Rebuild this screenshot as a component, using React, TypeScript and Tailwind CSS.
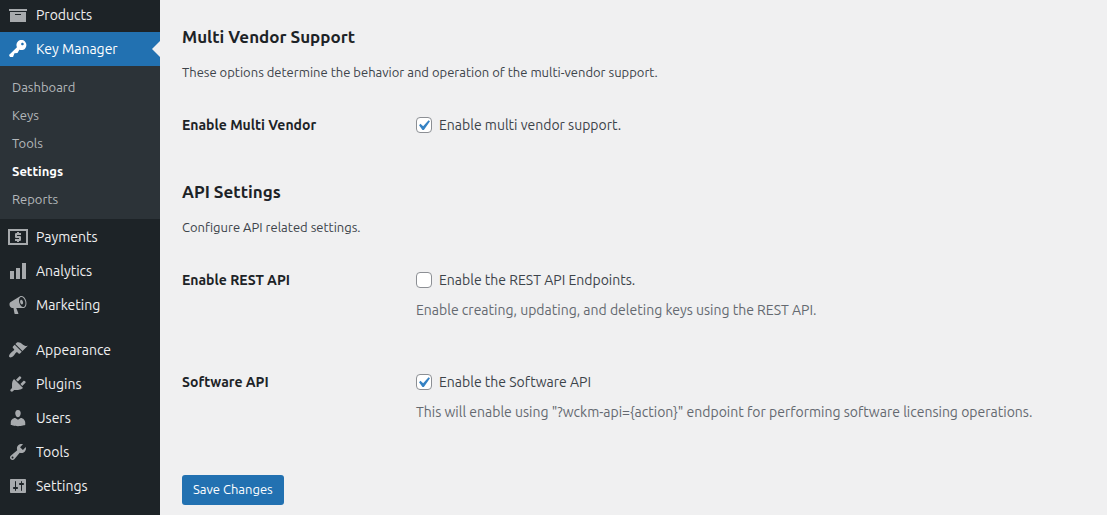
import React, { useState } from 'react';
import clsx from 'clsx';

interface IconProps {
  d: string;
}

const icons = {
  archive: 'M19 4v2H1V4h18zM2 7h16v10H2V7zm11 3V9H7v1h6z',
  key: 'M16.95 2.58c1.96 1.95 1.96 5.12 0 7.07-1.51 1.51-3.75 1.84-5.59 1.01l-1.87 3.31-2.99.31L5 18H2l-1-2 7.95-7.69c-.92-1.87-.62-4.18.93-5.73 1.95-1.96 5.12-1.96 7.07 0zm-2.51 3.79c.74 0 1.33-.6 1.33-1.34 0-.73-.59-1.33-1.33-1.33-.73 0-1.33.6-1.33 1.33 0 .74.6 1.34 1.33 1.34z',
  payments: 'M0 2h20v16H0V2zm2 2v12h16V4H2zM9 5h2v1h2v2H9v1h3.2l.8.8v3.4l-.8.8H11v1H9v-1H7v-2h4v-1H7.8L7 10.200V6.800L7.800 6H9V5z',
  chart: 'M18 18V2h-4v16h4zm-6 0V7H8v11h4zm-6 0v-8H2v8h4z',
  megaphone: 'M18.15 5.94c.46 1.62.38 3.22-.02 4.48-.42 1.28-1.26 2.18-2.3 2.48-.16.06-.26.06-.4.06-.06.02-.12.02-.18.02-.06.02-.14.02-.22.02h-6.8l2.22 5.5c.02.14-.06.26-.14.34-.08.1-.24.16-.34.16H6.95c-.1 0-.26-.06-.34-.16-.08-.08-.16-.2-.14-.34l-1-5.5H4.25l-.02-.02c-.5.06-1.08-.18-1.54-.62s-.88-1.08-1.06-1.88c-.24-.8-.2-1.56-.02-2.2.18-.62.58-1.08 1.06-1.3l.02-.02 9-5.4c.1-.06.18-.1.24-.16.06-.04.14-.08.24-.12.16-.08.28-.12.5-.18 1.04-.3 2.24.1 3.22.98s1.84 2.24 2.26 3.86zm-2.58 5.98h-.02c.4-.1.74-.34 1.04-.7.58-.7.86-1.76.86-3.04 0-.64-.1-1.3-.28-1.98-.34-1.36-1.02-2.5-1.78-3.24s-1.68-1.1-2.46-.88c-.82.22-1.4.96-1.7 2-.32 1.04-.28 2.36.06 3.72.38 1.36 1 2.5 1.8 3.24.78.74 1.62 1.1 2.48.88zm-2.54-7.08c.22-.04.42-.02.62.04.38.16.76.48 1.02 1s.42 1.2.42 1.78c0 .3-.04.56-.12.8-.18.48-.44.84-.86.94-.34.1-.8-.06-1.14-.4s-.64-.86-.78-1.5c-.18-.62-.12-1.24.02-1.72s.48-.84.82-.94z',
  brush: 'M14.48 11.06L7.41 3.99l1.5-1.5c.5-.56 2.3-.47 3.51.32 1.21.8 1.43 1.28 2.91 2.1 1.18.64 2.45 1.26 4.45.85zm-.71.71L6.7 4.7 4.93 6.47c-.39.39-.39 1.02 0 1.41l1.06 1.06c.39.39.39 1.03 0 1.42-.6.6-1.43 1.11-2.21 1.69-.35.26-.7.53-1.01.84C1.43 14.23.4 16.08 1.4 17.07c.99 1 2.84-.03 4.18-1.36.31-.31.58-.66.85-1.02.57-.78 1.08-1.61 1.69-2.21.39-.39 1.02-.39 1.41 0l1.06 1.06c.39.39 1.02.39 1.41 0z',
  plug: 'M13.11 4.36L9.87 7.6 8 5.73l3.24-3.24c.35-.34 1.05-.2 1.56.32.52.51.66 1.21.31 1.55zm-8 1.77l.91-1.12 9.01 9.01-1.19.84c-.71.71-2.63 1.16-3.82 1.16H6.14L4.9 17.26c-.59.59-1.54.59-2.12 0-.59-.58-.59-1.53 0-2.12l1.24-1.24v-3.88c0-1.13.4-3.19 1.09-3.89zm7.26 3.97l3.24-3.24c.34-.35 1.04-.21 1.55.31.52.51.66 1.21.31 1.55l-3.24 3.25z',
  user: 'M10 9.25c-2.27 0-2.73-3.44-2.73-3.44C7 4.02 7.82 2 9.97 2c2.16 0 2.98 2.02 2.71 3.81 0 0-.41 3.44-2.68 3.44zm0 2.57L12.72 10c2.39 0 4.52 2.33 4.52 4.53v2.49s-3.65 1.13-7.24 1.13c-3.65 0-7.24-1.13-7.24-1.13v-2.49c0-2.25 1.94-4.48 4.47-4.48z',
  wrench: 'M16.68 9.77c-1.34 1.34-3.3 1.67-4.95.99l-5.41 6.52c-.99.99-2.59.99-3.58 0s-.99-2.59 0-3.57l6.52-5.42c-.68-1.65-.35-3.61.99-4.95 1.28-1.28 3.12-1.62 4.72-1.06l-2.89 2.89 2.82 2.82 2.86-2.87c.53 1.58.18 3.39-1.08 4.65zM3.81 16.21c.4.39 1.04.39 1.43 0 .4-.4.4-1.04 0-1.43-.39-.4-1.03-.4-1.43 0-.39.39-.39 1.03 0 1.43z',
  sliders: 'M18 16V4c0-.55-.45-1-1-1H3c-.55 0-1 .45-1 1v12c0 .55.45 1 1 1h14c.55 0 1-.45 1-1zM8 11h1c.55 0 1 .45 1 1s-.45 1-1 1H8v1.500c0 .28-.22.5-.5.5s-.5-.22-.5-.5V13H6c-.55 0-1-.45-1-1s.45-1 1-1h1V5.500c0-.28.22-.5.5-.5s.5.22.5.5V11zm5-2h-1c-.55 0-1-.45-1-1s.45-1 1-1h1V5.500c0-.28.22-.5.5-.5s.5.22.5.5V7h1c.55 0 1 .45 1 1s-.45 1-1 1h-1v5.500c0 .28-.22.5-.5.5s-.5-.22-.5-.5V9z',
};

const MenuIcon: React.FC<IconProps> = ({ d }) => (
  <svg viewBox="0 0 20 20" className="size-5 shrink-0" fill="currentColor" fillRule="evenodd" aria-hidden="true">
    <path d={d} />
  </svg>
);

const MenuItem: React.FC<{ icon: string; label: string; active?: boolean }> = ({ icon, label, active }) => (
  <a
    href="#"
    className={clsx(
      'flex h-[34px] items-center gap-2 pl-2 text-sm',
      active ? 'relative bg-[#2271b1] text-white' : 'text-[#f0f0f1]'
    )}
  >
    <span className={active ? 'text-white' : 'text-[#a7aaad]'}>
      <MenuIcon d={icon} />
    </span>
    {label}
    {active && <span className="absolute right-0 border-y-8 border-r-8 border-y-transparent border-r-[#f0f0f1]" />}
  </a>
);

const submenu = ['Dashboard', 'Keys', 'Tools', 'Settings', 'Reports'];

const shopMenu = [
  { label: 'Payments', icon: icons.payments },
  { label: 'Analytics', icon: icons.chart },
  { label: 'Marketing', icon: icons.megaphone },
];

const siteMenu = [
  { label: 'Appearance', icon: icons.brush },
  { label: 'Plugins', icon: icons.plug },
  { label: 'Users', icon: icons.user },
  { label: 'Tools', icon: icons.wrench },
  { label: 'Settings', icon: icons.sliders },
];

interface OptionProps {
  id: string;
  title: string;
  label: string;
  description?: string;
  defaultChecked?: boolean;
}

const Option: React.FC<OptionProps> = ({ id, title, label, description, defaultChecked = false }) => {
  const [checked, setChecked] = useState(defaultChecked);

  return (
    <div className="grid grid-cols-[234px_1fr] text-sm leading-5">
      <h3 className="font-semibold text-[#1d2327]">{title}</h3>
      <div>
        <div className="flex items-center gap-[7px]">
          <span className="grid size-4 shrink-0">
            <input
              id={id}
              type="checkbox"
              checked={checked}
              onChange={e => setChecked(e.target.checked)}
              className="col-start-1 row-start-1 size-4 appearance-none rounded border border-[#8c8f94] bg-white"
            />
            {checked && (
              <svg
                viewBox="2.86 1.9 15.24 15.24"
                className="pointer-events-none col-start-1 row-start-1 size-4"
                aria-hidden="true"
              >
                <path d="M14.83 4.89l1.34.94-5.81 8.38H9.02L5.78 9.67l1.34-1.25 2.57 2.4z" fill="#3582c4" />
              </svg>
            )}
          </span>
          <label htmlFor={id}>{label}</label>
        </div>
        {description && <p className="mt-2.5 text-[#646970]">{description}</p>}
      </div>
    </div>
  );
};

const App: React.FC = () => {
  return (
    <div className="flex min-h-screen bg-[#f0f0f1] font-['Ubuntu','Noto_Sans',sans-serif] text-[#3c434a]">
      <nav className="w-40 shrink-0 bg-[#1d2327]">
        <div className="-mt-0.5">
          <MenuItem icon={icons.archive} label="Products" />
        </div>
        <MenuItem icon={icons.key} label="Key Manager" active />
        <ul className="bg-[#2c3338] pt-2 pb-[5px] text-[13px]">
          {submenu.map(item => (
            <li key={item}>
              <a
                href="#"
                className={clsx(
                  'flex h-7 items-center px-3',
                  item === 'Settings' ? 'font-semibold text-white' : 'text-[#b4b8bb] hover:text-[#72aee6]'
                )}
              >
                {item}
              </a>
            </li>
          ))}
        </ul>
        <div className="pt-px pb-[11px]">
          {shopMenu.map(item => (
            <MenuItem key={item.label} icon={item.icon} label={item.label} />
          ))}
        </div>
        {siteMenu.map(item => (
          <MenuItem key={item.label} icon={item.icon} label={item.label} />
        ))}
      </nav>

      <main className="min-w-0 flex-1 px-[22px] pt-[25px]">
        <form onSubmit={e => e.preventDefault()}>
          <section>
            <h2 className="text-[17px] leading-6 font-semibold text-[#1d2327]">Multi Vendor Support</h2>
            <p className="mt-[13px] text-[13px] leading-5">
              These options determine the behavior and operation of the multi-vendor support.
            </p>
            <div className="mt-[33px]">
              <Option id="multi-vendor" title="Enable Multi Vendor" label="Enable multi vendor support." defaultChecked />
            </div>
          </section>

          <section className="mt-[45px]">
            <h2 className="text-[17px] leading-6 font-semibold text-[#1d2327]">API Settings</h2>
            <p className="mt-[13px] text-[13px] leading-5">Configure API related settings.</p>
            <div className="mt-[33px] space-y-[52px]">
              <Option
                id="rest-api"
                title="Enable REST API"
                label="Enable the REST API Endpoints."
                description="Enable creating, updating, and deleting keys using the REST API."
              />
              <Option
                id="software-api"
                title="Software API"
                label="Enable the Software API"
                description={'This will enable using "?wckm-api={action}" endpoint for performing software licensing operations.'}
                defaultChecked
              />
            </div>
          </section>

          <button
            type="submit"
            className="mt-[53px] mb-2.5 h-[30px] rounded-[3px] bg-[#2271b1] px-[11px] text-[13px] text-white hover:bg-[#135e96]"
          >
            Save Changes
          </button>
        </form>
      </main>
    </div>
  );
};

export default App;
